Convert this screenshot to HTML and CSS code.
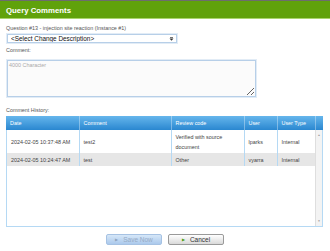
FILE: index.html
```html
<!DOCTYPE html>
<html lang="en">
<head>
    <meta charset="UTF-8">
    <meta name="viewport" content="width=device-width, initial-scale=1.0">
    <title>Query Comments</title>
    <link rel="stylesheet" href="styles.css">
</head>
<body>

<div class="dialog-title">Query Comments</div>

<div class="dialog-body">
    <div class="label question">Question #13 - injection site reaction (Instance #1)</div>
    <div class="select-wrap">
        <select class="change-select">
            <option>&lt;Select Change Description&gt;</option>
        </select>
        <svg class="select-arrow" width="5" height="4" viewBox="0 0 5 4">
            <rect x="1" y="0" width="3" height="0.8" fill="#555"/>
            <polygon points="0.5,1.5 4.5,1.5 2.5,3.8" fill="#333"/>
        </svg>
    </div>

    <div class="label comment-label">Comment:</div>
    <textarea class="comment-box" placeholder="4000 Character"></textarea>

    <div class="label history-label">Comment History:</div>
    <div class="history">
        <table class="history-head">
            <colgroup>
                <col class="w-date"><col class="w-comment"><col class="w-code">
                <col class="w-user"><col class="w-type"><col class="w-scroll">
            </colgroup>
            <tr>
                <th>Date</th>
                <th>Comment</th>
                <th>Review code</th>
                <th>User</th>
                <th>User Type</th>
                <th class="c-scroll"></th>
            </tr>
        </table>
        <div class="history-body">
            <table class="history-rows">
                <colgroup>
                    <col class="w-date-body"><col class="w-comment"><col class="w-code">
                    <col class="w-user"><col class="w-type">
                </colgroup>
                <tr>
                    <td>2024-02-05 10:37:48 AM</td>
                    <td>test2</td>
                    <td>Verified with source document</td>
                    <td>lparks</td>
                    <td class="last">Internal</td>
                </tr>
                <tr class="alt">
                    <td>2024-02-05 10:24:47 AM</td>
                    <td>test</td>
                    <td>Other</td>
                    <td>vyarra</td>
                    <td class="last">Internal</td>
                </tr>
            </table>
            <div class="scrollbar">
                <span>&#9650;</span>
                <span>&#9660;</span>
            </div>
        </div>
    </div>

    <div class="actions">
        <button class="btn btn-save" disabled><span class="tri">&#9654;</span>Save Now</button>
        <button class="btn btn-cancel"><span class="tri">&#9654;</span>Cancel</button>
    </div>
</div>

</body>
</html>
```

FILE: styles.css
```css
body {
    font-family: 'Liberation Sans', Arial, sans-serif;
    margin: 0;
    padding: 0;
    background: white;
    color: #444;
}
.dialog-title {
    border-top: 1px solid #6d6d6d;
    border-bottom: 1px solid #a8d46c;
    background: #60a20b;
    color: white;
    font-weight: bold;
    font-size: 7.8px;
    height: 17px;
    line-height: 19px;
    padding-left: 6px;
}
.dialog-body {
    padding: 0 7px 0 6px;
}
.label {
    font-size: 5.4px;
    line-height: 7px;
    color: #555;
}
.question {
    margin-top: 6px;
}
.select-wrap {
    position: relative;
    width: 170px;
    margin: 2px 0 0 1px;
}
.change-select {
    display: block;
    appearance: none;
    width: 170px;
    height: 9px;
    padding: 0 0 0 3px;
    font-family: 'Liberation Sans', Arial, sans-serif;
    font-size: 6.4px;
    line-height: 7px;
    color: #111;
    background: white;
    border: 1px solid #b7cfe8;
    box-shadow: 0 0 0 1px #e2ecf6;
    border-radius: 0;
    box-sizing: border-box;
}
.select-arrow {
    position: absolute;
    right: 3px;
    top: 2.5px;
}
.comment-label {
    margin-top: 4px;
}
.comment-box {
    display: block;
    width: 249px;
    height: 37px;
    margin: 6px 0 0 1px;
    padding: 1px 1px;
    box-sizing: border-box;
    font-family: 'Liberation Sans', Arial, sans-serif;
    font-size: 5.4px;
    background: #fbfbfb;
    border: 1px solid #b7cfe8;
    box-shadow: 0 0 0 1px #e2ecf6;
    outline: none;
}
.comment-box::placeholder {
    color: #aaa;
}
.history-label {
    margin-top: 10px;
}
.history {
    width: 317px;
    margin-top: 2px;
}
.history table {
    border-collapse: collapse;
    table-layout: fixed;
    font-size: 5.4px;
}
.w-date { width: 73px; }
.w-date-body { width: 72px; }
.w-comment { width: 92px; }
.w-code { width: 73px; }
.w-user { width: 33px; }
.w-type { width: 38px; }
.w-scroll { width: 8px; }
.history-head {
    width: 317px;
    background: linear-gradient(#66b6ec, #2a87d0);
    color: white;
}
.history-head th {
    height: 14px;
    padding: 0 4px;
    text-align: left;
    font-weight: normal;
    border-right: 1px solid rgba(255, 255, 255, 0.35);
    white-space: nowrap;
    overflow: hidden;
}
.history-head th.c-scroll {
    border-right: none;
    padding: 0;
}
.history-body {
    display: flex;
    height: 96px;
    border: 1px solid #b5d9f4;
    border-top: none;
}
.history-rows {
    width: 308px;
    align-self: flex-start;
}
.history-rows td {
    padding: 2px 4px 1px;
    line-height: 10px;
    vertical-align: middle;
    border-right: 1px solid #b5d9f4;
}
.history-rows td.last {
    border-right: none;
}
.history-rows tr.alt {
    background: #e6e6e6;
}
.scrollbar {
    width: 8px;
    margin-left: auto;
    background: #f3f3f3;
    border-left: 1px solid #dedede;
    display: flex;
    flex-direction: column;
    justify-content: space-between;
    align-items: center;
    font-size: 3px;
    color: #999;
    padding: 3px 0;
    box-sizing: border-box;
}
.actions {
    display: flex;
    justify-content: center;
    gap: 6px;
    margin-top: 7px;
    padding-left: 1px;
}
.btn {
    width: 56px;
    height: 11px;
    padding: 0;
    font-family: 'Liberation Sans', Arial, sans-serif;
    font-size: 6.5px;
    border-radius: 2px;
    display: flex;
    align-items: center;
    justify-content: center;
    gap: 5px;
}
.btn .tri {
    font-size: 4px;
}
.btn-save {
    background: linear-gradient(#d6e7f8, #abc9ec);
    border: 1px solid #a6c2e3;
    color: #96abc6;
}
.btn-save .tri {
    color: #8ea4bf;
}
.btn-cancel {
    background: linear-gradient(#ffffff, #d9d9d9);
    border: 1px solid #9a9a9a;
    color: #333;
}
.btn-cancel .tri {
    color: #4c9f18;
}
```
